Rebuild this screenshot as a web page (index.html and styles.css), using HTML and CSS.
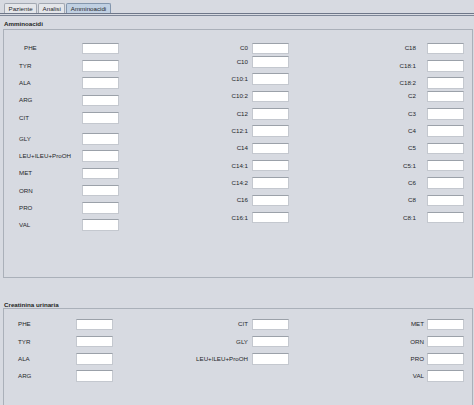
FILE: index.html
```html
<!DOCTYPE html>
<html lang="it">
<head>
<meta charset="utf-8">
<title>Amminoacidi</title>
<link rel="stylesheet" href="styles.css">
</head>
<body>
<div class="tabbar">
  <span class="tab">Paziente</span>
  <span class="tab">Analisi</span>
  <span class="tab sel">Amminoacidi</span>
</div>
<div class="content">
  <div class="sec-title">Amminoacidi</div>
  <div class="panel panel-top">
    <div class="col col-a">
      <div class="row"><span class="lbl ind">PHE</span><input class="fld" type="text"></div>
      <div class="row"><span class="lbl">TYR</span><input class="fld" type="text"></div>
      <div class="row"><span class="lbl">ALA</span><input class="fld" type="text"></div>
      <div class="row"><span class="lbl">ARG</span><input class="fld" type="text"></div>
      <div class="row"><span class="lbl">CIT</span><input class="fld" type="text"></div>
      <div class="row loose"><span class="lbl">GLY</span><input class="fld" type="text"></div>
      <div class="row"><span class="lbl">LEU+ILEU+ProOH</span><input class="fld" type="text"></div>
      <div class="row"><span class="lbl">MET</span><input class="fld" type="text"></div>
      <div class="row"><span class="lbl">ORN</span><input class="fld" type="text"></div>
      <div class="row"><span class="lbl">PRO</span><input class="fld" type="text"></div>
      <div class="row"><span class="lbl">VAL</span><input class="fld" type="text"></div>
    </div>
    <div class="col col-b">
      <div class="row"><span class="lbl">C0</span><input class="fld" type="text"></div>
      <div class="row tight"><span class="lbl">C10</span><input class="fld" type="text"></div>
      <div class="row"><span class="lbl">C10:1</span><input class="fld" type="text"></div>
      <div class="row"><span class="lbl">C10:2</span><input class="fld" type="text"></div>
      <div class="row"><span class="lbl">C12</span><input class="fld" type="text"></div>
      <div class="row"><span class="lbl">C12:1</span><input class="fld" type="text"></div>
      <div class="row"><span class="lbl">C14</span><input class="fld" type="text"></div>
      <div class="row"><span class="lbl">C14:1</span><input class="fld" type="text"></div>
      <div class="row"><span class="lbl">C14:2</span><input class="fld" type="text"></div>
      <div class="row"><span class="lbl">C16</span><input class="fld" type="text"></div>
      <div class="row"><span class="lbl">C16:1</span><input class="fld" type="text"></div>
    </div>
    <div class="col col-c">
      <div class="row"><span class="lbl">C18</span><input class="fld" type="text"></div>
      <div class="row"><span class="lbl">C18:1</span><input class="fld" type="text"></div>
      <div class="row"><span class="lbl">C18:2</span><input class="fld" type="text"></div>
      <div class="row tight"><span class="lbl">C2</span><input class="fld" type="text"></div>
      <div class="row"><span class="lbl">C3</span><input class="fld" type="text"></div>
      <div class="row"><span class="lbl">C4</span><input class="fld" type="text"></div>
      <div class="row"><span class="lbl">C5</span><input class="fld" type="text"></div>
      <div class="row"><span class="lbl">C5:1</span><input class="fld" type="text"></div>
      <div class="row"><span class="lbl">C6</span><input class="fld" type="text"></div>
      <div class="row"><span class="lbl">C8</span><input class="fld" type="text"></div>
      <div class="row"><span class="lbl">C8:1</span><input class="fld" type="text"></div>
    </div>
  </div>
  <div class="sec-title sec-second">Creatinina urinaria</div>
  <div class="panel panel-bottom">
    <div class="col col-a">
      <div class="row"><span class="lbl">PHE</span><input class="fld" type="text"></div>
      <div class="row"><span class="lbl">TYR</span><input class="fld" type="text"></div>
      <div class="row"><span class="lbl">ALA</span><input class="fld" type="text"></div>
      <div class="row"><span class="lbl">ARG</span><input class="fld" type="text"></div>
    </div>
    <div class="col col-b">
      <div class="row"><span class="lbl">CIT</span><input class="fld" type="text"></div>
      <div class="row"><span class="lbl">GLY</span><input class="fld" type="text"></div>
      <div class="row"><span class="lbl">LEU+ILEU+ProOH</span><input class="fld" type="text"></div>
    </div>
    <div class="col col-c">
      <div class="row"><span class="lbl">MET</span><input class="fld" type="text"></div>
      <div class="row"><span class="lbl">ORN</span><input class="fld" type="text"></div>
      <div class="row"><span class="lbl">PRO</span><input class="fld" type="text"></div>
      <div class="row"><span class="lbl">VAL</span><input class="fld" type="text"></div>
    </div>
  </div>
</div>
</body>
</html>
```

FILE: styles.css
```css
html, body {
  margin: 0;
  padding: 0;
}
body {
  width: 474px;
  height: 405px;
  overflow: hidden;
  background: #d7dae1;
  font-family: "Liberation Sans", Arial, sans-serif;
  font-size: 6.2px;
  color: #25262a;
}

/* tabs */
.tabbar {
  display: flex;
  gap: 1px;
  height: 10px;
  padding: 3px 0 0 4px;
  border-bottom: 1px solid #6e7789;
}
.tab {
  box-sizing: border-box;
  height: 10px;
  padding: 0 3.5px;
  line-height: 9px;
  border: 1px solid #a2a8b2;
  border-bottom: none;
  border-radius: 2px 2px 0 0;
  background: #e4e6ea;
  white-space: nowrap;
}
.tab.sel {
  background: #c0d0e2;
  border-color: #8396ad;
}

.content {
  margin-top: 1px;
  border-top: 1px solid #7d8697;
  padding-top: 4px;
}

.sec-title {
  font-weight: bold;
  height: 7px;
  line-height: 7px;
  padding-left: 4px;
  margin-bottom: 2px;
  color: #1e1f22;
}
.sec-second {
  margin-top: 23px;
  margin-bottom: 0;
}

.panel {
  box-sizing: border-box;
  width: 470px;
  margin-left: 3px;
  border: 1px solid #aab0b9;
  display: flex;
  align-items: flex-start;
}
.panel-top {
  height: 249px;
  padding-top: 12.7px;
}
.panel-bottom {
  height: 97px;
  border-bottom: none;
  padding-top: 9.5px;
}

.col {
  display: flex;
  flex-direction: column;
}

.row {
  display: flex;
  align-items: center;
  height: 11.6px;
  margin-top: 5.73px;
}
.row:first-child {
  margin-top: 0;
}
.row.tight {
  margin-top: 1.73px;
}
.row.loose {
  margin-top: 9.4px;
}

.lbl {
  flex: none;
  white-space: nowrap;
  line-height: 8px;
}
.lbl.ind {
  padding-left: 5px;
  box-sizing: border-box;
}

.fld {
  flex: none;
  box-sizing: border-box;
  width: 37px;
  height: 11.6px;
  margin: 0;
  padding: 0;
  background: #ffffff;
  border: 1px solid #c4c8cf;
  border-top-color: #9ba1a9;
  border-radius: 0;
  font-size: 6px;
}

/* top panel column geometry */
.panel-top .col-a { margin-left: 15px; }
.panel-top .col-a .lbl { width: 63px; }
.panel-top .col-b { margin-left: 69px; }
.panel-top .col-b .lbl { width: 60px; text-align: right; margin-right: 4px; }
.panel-top .col-c { margin-left: 67px; }
.panel-top .col-c .lbl { width: 60px; text-align: right; margin-right: 11px; }

/* bottom panel column geometry */
.panel-bottom .col-a { margin-left: 14px; }
.panel-bottom .col-a .lbl { width: 58px; }
.panel-bottom .col-b { margin-left: 75px; }
.panel-bottom .col-b .lbl { width: 60px; text-align: right; margin-right: 4px; }
.panel-bottom .col-c { margin-left: 70px; }
.panel-bottom .col-c .lbl { width: 65px; text-align: right; margin-right: 3px; }
```
